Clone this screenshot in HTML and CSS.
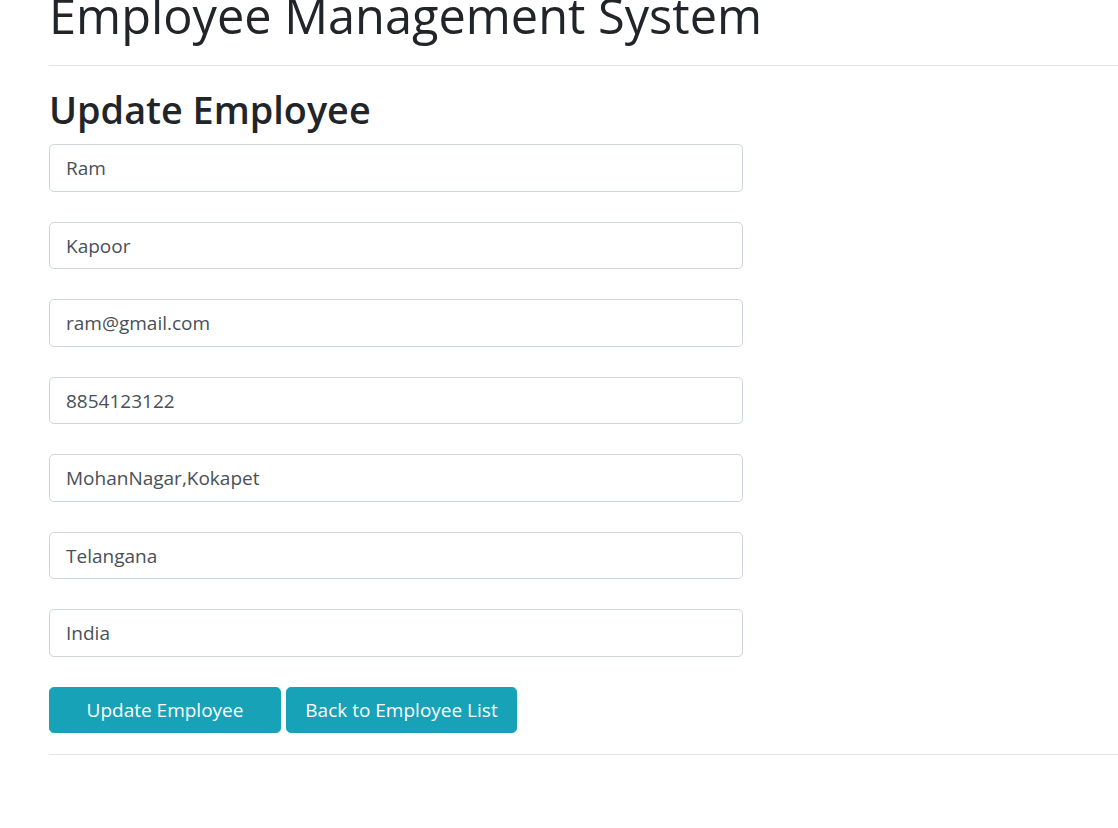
FILE: index.html
```html
<!DOCTYPE html>
<html lang="en">
<head>
<meta charset="utf-8">
<title>Employee Management System</title>
<link rel="stylesheet" href="styles.css">
</head>
<body>
<div class="container">
  <h1 class="title">Employee Management System</h1>
  <hr class="rule">
  <h2 class="subtitle">Update Employee</h2>
  <form class="form">
    <input class="field" type="text" value="Ram">
    <input class="field" type="text" value="Kapoor">
    <input class="field" type="text" value="ram@gmail.com">
    <input class="field" type="text" value="8854123122">
    <input class="field" type="text" value="MohanNagar,Kokapet">
    <input class="field" type="text" value="Telangana">
    <input class="field" type="text" value="India">
    <div class="actions">
      <button type="button" class="btn btn-update">Update Employee</button>
      <button type="button" class="btn btn-back">Back to Employee List</button>
    </div>
  </form>
  <hr class="rule rule-bottom">
</div>
</body>
</html>
```
FILE: styles.css
```css
* { box-sizing: border-box; }
html, body { margin: 0; padding: 0; background: #fff; }
body {
  font-family: "Open Sans", "Noto Sans", "Liberation Sans", sans-serif;
  color: #212529;
  overflow: hidden;
}
.container {
  padding-left: 49px;
}
.title {
  margin: -12.4px 0 0 0;
  font-size: 48.7px;
  font-weight: 400;
  line-height: 55px;
  white-space: nowrap;
}
.rule {
  border: 0;
  border-top: 1px solid rgba(0, 0, 0, 0.1);
  margin: 0;
  height: 0;
}
.title + .rule { margin-top: 22.4px; }
.subtitle {
  margin: 20.35px 0 0 0;
  font-size: 37.8px;
  font-weight: 600;
  line-height: 48px;
}
.form {
  margin-top: 9.95px;
  display: flex;
  flex-direction: column;
  gap: 30px;
  width: 694px;
}
.field {
  display: block;
  width: 694px;
  height: 47.5px;
  padding: 0 16px;
  border: 1px solid #ced4da;
  border-radius: 4.8px;
  font-family: inherit;
  font-size: 19px;
  color: #495057;
  background: #fff;
  outline: none;
}
.actions {
  display: flex;
  gap: 5px;
}
.btn {
  height: 46.6px;
  border: 1px solid #17a2b8;
  background: #17a2b8;
  color: #fff;
  border-radius: 4.8px;
  font-family: inherit;
  font-size: 19px;
  padding: 0;
  text-align: center;
  cursor: pointer;
}
.btn-update { width: 232px; }
.btn-back { width: 231px; }
.rule-bottom { margin-top: 20.5px; }
```
